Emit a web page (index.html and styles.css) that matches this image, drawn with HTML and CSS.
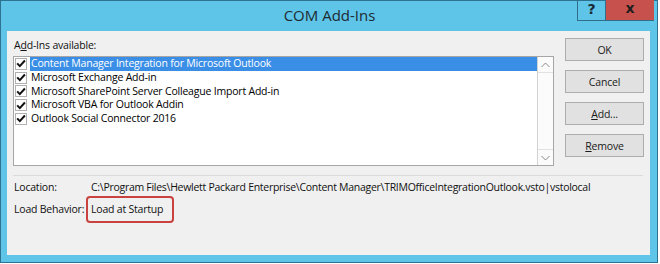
FILE: index.html
```html
<!DOCTYPE html>
<html lang="en">
<head>
  <meta charset="UTF-8" />
  <title>COM Add-Ins</title>
  <link rel="stylesheet" href="styles.css">
</head>
<body>
  <div class="window">
    <div class="titlebar">
      <div></div>
      <div class="title">COM Add-Ins</div>
      <div class="caption-buttons">
        <div class="cap-help">?</div>
        <div class="cap-close">x</div>
      </div>
    </div>

    <div class="client">
      <div class="top">
        <div class="left">
          <div class="label">A<u>d</u>d-Ins available:</div>
          <div class="listbox">
            <div class="items">
              <div class="item selected">
                <span class="check"><svg width="11" height="11" viewBox="0 0 11 11"><path d="M1.3 5.4 L4.2 8.4 L9.8 2.2" fill="none" stroke="#111" stroke-width="2.2"/></svg></span>
                <span class="text">Content Manager Integration for Microsoft Outlook</span>
              </div>
              <div class="item">
                <span class="check"><svg width="11" height="11" viewBox="0 0 11 11"><path d="M1.3 5.4 L4.2 8.4 L9.8 2.2" fill="none" stroke="#111" stroke-width="2.2"/></svg></span>
                <span class="text">Microsoft Exchange Add-in</span>
              </div>
              <div class="item">
                <span class="check"><svg width="11" height="11" viewBox="0 0 11 11"><path d="M1.3 5.4 L4.2 8.4 L9.8 2.2" fill="none" stroke="#111" stroke-width="2.2"/></svg></span>
                <span class="text">Microsoft SharePoint Server Colleague Import Add-in</span>
              </div>
              <div class="item">
                <span class="check"><svg width="11" height="11" viewBox="0 0 11 11"><path d="M1.3 5.4 L4.2 8.4 L9.8 2.2" fill="none" stroke="#111" stroke-width="2.2"/></svg></span>
                <span class="text">Microsoft VBA for Outlook Addin</span>
              </div>
              <div class="item">
                <span class="check"><svg width="11" height="11" viewBox="0 0 11 11"><path d="M1.3 5.4 L4.2 8.4 L9.8 2.2" fill="none" stroke="#111" stroke-width="2.2"/></svg></span>
                <span class="text">Outlook Social Connector 2016</span>
              </div>
            </div>
            <div class="scrollbar">
              <div class="arrow"><svg width="9" height="6" viewBox="0 0 9 6"><path d="M0.5 5 L4.5 1 L8.5 5" fill="none" stroke="#8a8a8a" stroke-width="1"/></svg></div>
              <div class="track"></div>
              <div class="arrow"><svg width="9" height="6" viewBox="0 0 9 6"><path d="M0.5 1 L4.5 5 L8.5 1" fill="none" stroke="#8a8a8a" stroke-width="1"/></svg></div>
            </div>
          </div>
        </div>

        <div class="buttons">
          <button>OK</button>
          <button>Cancel</button>
          <button><u>A</u>dd...</button>
          <button><u>R</u>emove</button>
        </div>
      </div>

      <div class="separator"></div>

      <div class="info">
        <div>Location:</div>
        <div class="path">C:\Program Files\Hewlett Packard Enterprise\Content Manager\TRIMOfficeIntegrationOutlook.vsto|vstolocal</div>
        <div>Load Behavior:</div>
        <div><span class="highlight">Load at Startup</span></div>
      </div>
    </div>
  </div>
</body>
</html>
```

FILE: styles.css
```css
* {
  margin: 0;
  padding: 0;
  box-sizing: border-box;
}

body {
  background: #ffffff;
  font-family: 'Open Sans', sans-serif;
  font-size: 10.5px;
  letter-spacing: -0.2px;
  color: #111;
}

.window {
  width: 658px;
  height: 263px;
  background: #5ec5e8;
  border: 1px solid #2d7391;
  display: flex;
  flex-direction: column;
}

.titlebar {
  height: 30px;
  display: grid;
  grid-template-columns: 1fr auto 1fr;
}

.title {
  font-size: 15px;
  letter-spacing: 0;
  color: #1d2b33;
  line-height: 28px;
  padding-left: 1px;
}

.caption-buttons {
  justify-self: end;
  display: flex;
  height: 21px;
  margin-top: -1px;
  margin-right: 3px;
}

.cap-help {
  width: 28px;
  border: 1px solid #2f6f8a;
  border-top: none;
  border-right: none;
  text-align: center;
  font-family: 'DejaVu Sans', sans-serif;
  font-weight: bold;
  font-size: 14px;
  line-height: 19px;
  color: #1a2a33;
}

.cap-close {
  width: 49px;
  background: #c7524d;
  border-bottom: 1px solid #2f6f8a;
  border-left: 1px solid #2f6f8a;
  text-align: center;
  font-family: 'DejaVu Sans', sans-serif;
  font-weight: bold;
  font-size: 14px;
  line-height: 17px;
  color: #1e1e1e;
}

.client {
  flex: 1;
  margin: 0 7px 7px 6px;
  background: #f0f0f0;
  padding: 6px 6px 0 6px;
}

.top {
  display: flex;
  gap: 11px;
}

.left {
  width: 541px;
}

.label {
  line-height: 16px;
  height: 16px;
  margin-bottom: 3px;
  padding-left: 1px;
}

.listbox {
  height: 110px;
  background: #fff;
  border: 1px solid #a6a6a6;
  display: flex;
}

.items {
  flex: 1;
  padding-left: 1px;
}

.item {
  display: flex;
  align-items: center;
  height: 13.75px;
  color: #000;
}

.check {
  width: 12px;
  height: 12px;
  border: 1px solid #b0b0b0;
  background: #fff;
  display: flex;
  align-items: center;
  justify-content: center;
  margin-right: 3px;
}

.item .text {
  flex: 1;
  padding-left: 1px;
  line-height: 13.75px;
  white-space: nowrap;
}

.item.selected .text {
  background: #3a8ee6;
  color: #fff;
}

.scrollbar {
  width: 16px;
  border-left: 1px solid #d2d2d2;
  display: flex;
  flex-direction: column;
  background: #fbfbfb;
}

.arrow {
  height: 16px;
  display: flex;
  align-items: center;
  justify-content: center;
  border-bottom: 1px solid #e2e2e2;
}

.arrow:last-child {
  border-bottom: none;
  border-top: 1px solid #e2e2e2;
}

.track {
  flex: 1;
}

.buttons {
  width: 79px;
  display: flex;
  flex-direction: column;
  gap: 9px;
  padding-top: 1px;
}

.buttons button {
  height: 23px;
  background: #e1e1e1;
  border: 1px solid #adadad;
  font-family: 'Open Sans', sans-serif;
  font-size: 10.5px;
  letter-spacing: -0.2px;
  color: #1a1a1a;
}

.separator {
  height: 1px;
  background: #dadada;
  margin-top: 9px;
  margin-right: 1px;
}

.info {
  display: grid;
  grid-template-columns: 77px 1fr;
  line-height: 22px;
  padding-left: 1px;
  white-space: nowrap;
}

.info .path {
  letter-spacing: -0.28px;
}

.highlight {
  position: relative;
}

.highlight::after {
  content: "";
  position: absolute;
  left: -5px;
  right: -11px;
  top: -6px;
  bottom: -7px;
  border: 2.5px solid #c9423f;
  border-radius: 4px;
}
```
